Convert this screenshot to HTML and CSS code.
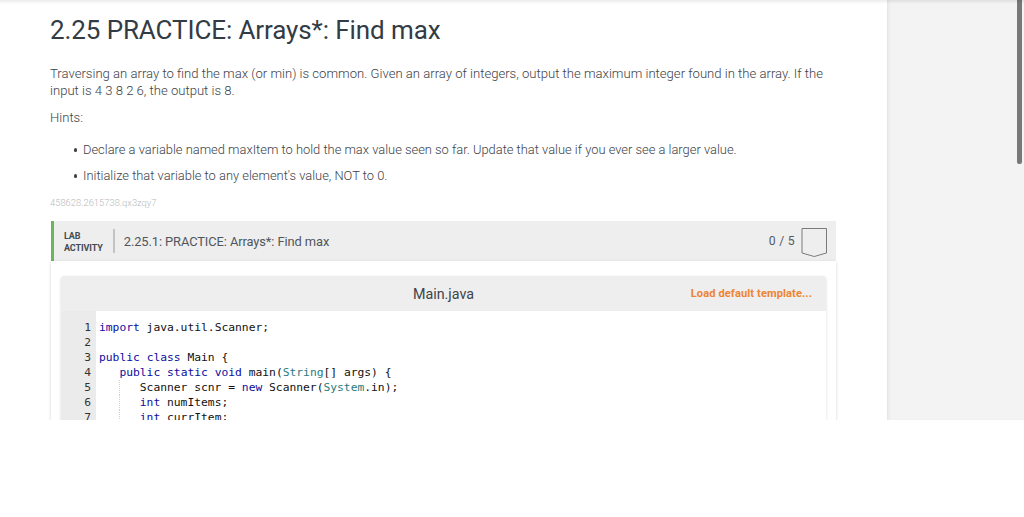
FILE: index.html
```html
<!DOCTYPE html>
<html>
<head>
<meta charset="utf-8">
<link rel="stylesheet" href="styles.css">
</head>
<body>
<div class="viewport">
  <main class="content">
    <h1 class="title">2.25 PRACTICE: Arrays*: Find max</h1>
    <p class="text">Traversing an array to find the max (or min) is common. Given an array of integers, output the maximum integer found in the array. If the input is 4 3 8 2 6, the output is 8.</p>
    <p class="text hints">Hints:</p>
    <ul class="hint-list">
      <li>Declare a variable named maxItem to hold the max value seen so far. Update that value if you ever see a larger value.</li>
      <li>Initialize that variable to any element's value, NOT to 0.</li>
    </ul>
    <div class="ref-id">458628.2615738.qx3zqy7</div>
    <section class="lab">
      <div class="lab-header">
        <div class="lab-label">LAB<br>ACTIVITY</div>
        <div class="lab-divider"></div>
        <div class="lab-title">2.25.1: PRACTICE: Arrays*: Find max</div>
        <div class="lab-score">0 / 5</div>
        <svg class="lab-badge" width="27" height="31" viewBox="0 0 27 31"><path d="M1 1.5 H25.5 V26 L13.25 29.5 L1 26 Z" fill="none" stroke="#7a7a7a" stroke-width="1"/></svg>
      </div>
      <div class="lab-body">
        <div class="editor">
          <div class="editor-header">
            <span class="file-name">Main.java</span>
            <span class="load-template">Load default template...</span>
          </div>
          <div class="code">
            <div class="gutter">
              <div>1</div><div>2</div><div>3</div><div>4</div><div>5</div><div>6</div><div>7</div>
            </div>
            <div class="lines">
              <div class="ln"><span class="kw">import</span> java.util.Scanner;</div>
              <div class="ln"> </div>
              <div class="ln"><span class="kw">public</span> <span class="kw">class</span> Main {</div>
              <div class="ln">   <span class="kw">public</span> <span class="kw">static</span> <span class="kw">void</span> main(<span class="ty">String</span>[] args) {</div>
              <div class="ln ind"><span class="guide"></span>      Scanner scnr = <span class="kw">new</span> Scanner(<span class="ty">System</span>.in);</div>
              <div class="ln ind"><span class="guide"></span>      <span class="kw">int</span> numItems;</div>
              <div class="ln ind"><span class="guide"></span>      <span class="kw">int</span> currItem;</div>
            </div>
          </div>
        </div>
      </div>
    </section>
  </main>
  <aside class="side">
    <div class="scrollbar"></div>
  </aside>
</div>
</body>
</html>
```

FILE: styles.css
```css
* { box-sizing: border-box; }
html, body { margin: 0; padding: 0; background: #fff; }
body { font-family: Roboto, "Noto Sans", Arial, sans-serif; }

.viewport {
  height: 420px;
  overflow: hidden;
  display: flex;
  position: relative;
}
.viewport::before {
  content: "";
  position: absolute;
  left: 0; right: 0; top: 0;
  height: 4px;
  background: linear-gradient(rgba(0,0,0,0.08), rgba(0,0,0,0));
  z-index: 2;
}

.content {
  width: 887px;
  flex: none;
  padding: 15px 51px 0 50px;
  overflow: hidden;
}

.title {
  margin: 0;
  font-size: 26px;
  line-height: 30px;
  font-weight: 400;
  color: #333b44;
  letter-spacing: -0.1px;
}

.text {
  margin: 20px 0 0;
  font-size: 13.1px;
  line-height: 17px;
  font-weight: 300;
  color: #3d4247;
}
.hints { margin-top: 10px; }

.hint-list {
  margin: 15px 0 0;
  padding: 0 0 0 33px;
  list-style: none;
  font-size: 12.9px;
  line-height: 17px;
  font-weight: 300;
  color: #3d4247;
}
.hint-list li { position: relative; }
.hint-list li::before {
  content: "";
  position: absolute;
  left: -9.5px;
  top: 7px;
  width: 3.5px;
  height: 3.5px;
  border-radius: 50%;
  background: #3d4247;
}
.hint-list li + li { margin-top: 9px; }

.ref-id {
  margin-top: 14px;
  font-size: 9.4px;
  line-height: 10px;
  color: #b9b9b9;
  font-weight: 300;
}

.lab { margin-top: 13px; margin-left: 1px; }

.lab-header {
  height: 40px;
  background: #eeeeee;
  border-left: 3px solid #6cb55a;
  display: flex;
  align-items: center;
  padding: 0 8px 0 10px;
}
.lab-label {
  font-size: 9px;
  line-height: 12px;
  font-weight: 700;
  color: #444a50;
  padding-top: 1px;
  letter-spacing: -0.1px;
}
.lab-divider {
  width: 2px;
  height: 24px;
  background: #c4c4c4;
  margin: 0 9px 0 10px;
}
.lab-title {
  flex: 1;
  font-size: 12.9px;
  color: #50565c;
  font-weight: 400;
  letter-spacing: -0.1px;
}
.lab-score {
  font-size: 12.2px;
  color: #555b61;
  margin-right: 6px;
  letter-spacing: 0.3px;
}
.lab-badge { display: block; margin-top: 2px; }

.lab-body {
  background: #fff;
  padding: 15px 10px 0;
  box-shadow: 0 1px 3px rgba(0,0,0,0.18);
  height: 200px;
}

.editor {
  box-shadow: 0 1px 3px rgba(0,0,0,0.15);
  border-radius: 3px 3px 0 0;
  overflow: hidden;
  height: 200px;
}
.editor-header {
  height: 35px;
  background: #eeeeee;
  display: flex;
  align-items: center;
  justify-content: center;
  position: relative;
}
.file-name {
  font-size: 14.3px;
  color: #3f4449;
}
.load-template {
  position: absolute;
  right: 14px;
  top: 11px;
  font-size: 11.1px;
  font-weight: 700;
  color: #ec8433;
  letter-spacing: 0.1px;
}

.code {
  display: flex;
  font-family: "DejaVu Sans Mono", "Liberation Mono", monospace;
  font-size: 11.3px;
  line-height: 15px;
  color: #111;
  background: #fff;
  height: 200px;
}
.gutter {
  width: 35px;
  background: #ebebeb;
  text-align: right;
  padding: 9px 5px 0 0;
  color: #333;
}
.lines {
  padding: 9px 0 0 3px;
}
.ln { white-space: pre; height: 15px; }
.kw { color: #0d0d9e; }
.ty { color: #2a7c80; }
.ind { position: relative; }
.guide {
  position: absolute;
  left: 20px;
  top: 0;
  bottom: 0;
  border-left: 1px dotted #d0d0d0;
}

.side {
  flex: 1;
  background: #f3f3f3;
  border-left: 1px solid #e6e6e6;
  box-shadow: inset 2px 0 2px rgba(0,0,0,0.03);
  position: relative;
}
.scrollbar {
  position: absolute;
  right: 2px;
  top: 0;
  width: 5px;
  height: 164px;
  background: #787878;
  border-radius: 0 0 2px 2px;
}
```
